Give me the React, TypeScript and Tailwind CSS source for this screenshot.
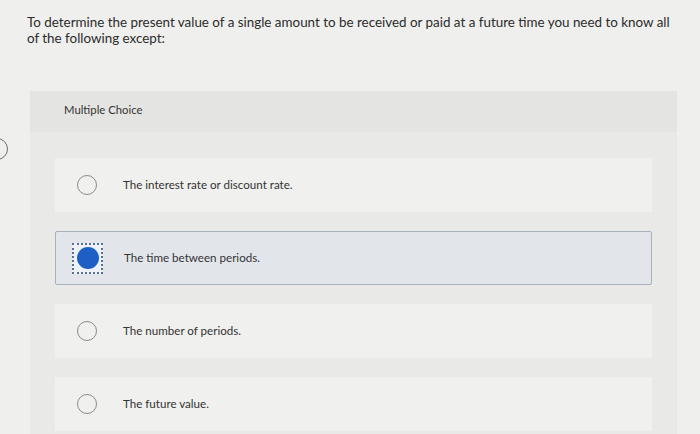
import React from "react";

type Option = { label: string; selected?: boolean };

const options: Option[] = [
  { label: "The interest rate or discount rate." },
  { label: "The time between periods.", selected: true },
  { label: "The number of periods." },
  { label: "The future value." },
];

function Radio({ selected }: { selected?: boolean }) {
  if (selected) {
    return (
      <div className="w-[31px] h-[31px] -ml-[6px] -mr-[5px] flex items-center justify-center border-2 border-dotted border-[#5b6f92] bg-[#eef2f8]">
        <div className="w-[22px] h-[22px] rounded-full bg-[#1d5fc5]" />
      </div>
    );
  }
  return <div className="w-[20px] h-[20px] rounded-full border-[1.5px] border-[#8a8a8e] bg-transparent" />;
}

export default function App() {
  return (
    <div className="relative w-[700px] h-[434px] overflow-hidden bg-[#efefed] font-['Lato',sans-serif] text-[#2e2e2e]">
      {/* edge of a neighbouring control peeking in at the left */}
      <div className="absolute -left-[14px] top-[138px] w-[22px] h-[22px] rounded-full border-[1.5px] border-[#6d6d70]" />

      <p className="w-[680px] pl-[27px] pt-[14px] text-[13.4px] leading-[16px] text-[#2b2b2b]">
        To determine the present value of a single amount to be received or paid at a future time you need to know all
        of the following except:
      </p>

      <div className="ml-[30px] mr-[23px] mt-[45px] bg-[#e9e9e7] pb-[10px]">
        <div className="h-[41px] bg-[#e4e4e2] pl-[34px] pt-[12px] text-[11.3px] leading-[14px] text-[#333]">
          Multiple Choice
        </div>
        <div className="px-[25px] pt-[26px] flex flex-col gap-[19px]">
          {options.map((o) => (
            <div
              key={o.label}
              className={
                o.selected
                  ? "h-[54px] flex items-center pl-[22px] gap-[26px] rounded-[2px] border border-[#a8b0bc] bg-[#e2e6eb]"
                  : "h-[54px] flex items-center pl-[22px] gap-[26px] bg-[#f0f0ee]"
              }
            >
              <Radio selected={o.selected} />
              <span className="text-[11.6px] leading-[14px] text-[#333]">{o.label}</span>
            </div>
          ))}
        </div>
      </div>
    </div>
  );
}
